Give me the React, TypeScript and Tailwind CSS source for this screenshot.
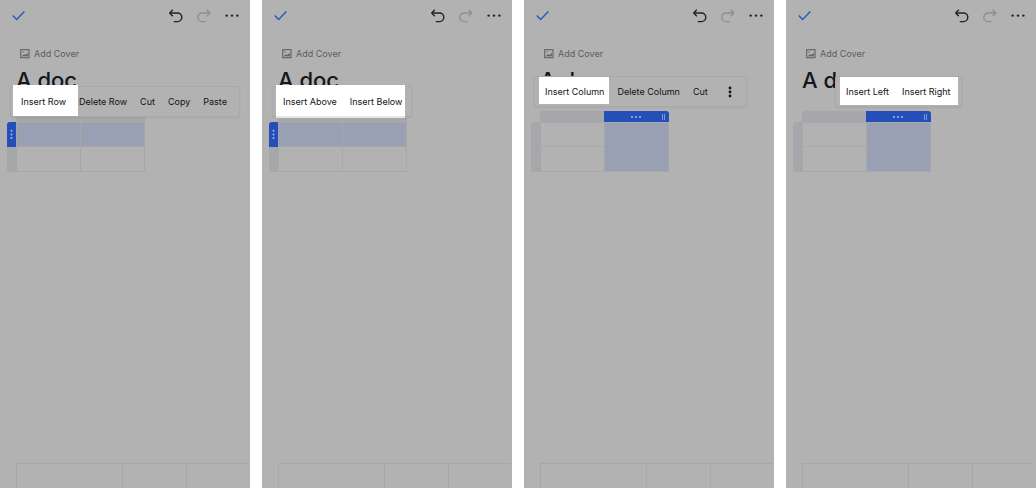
import clsx from 'clsx';

interface Screen {
  id: string;
  selection: 'row' | 'column';
  actions: string[];
  more?: boolean;
  toolbar: string;
  spotlight: string;
}

const screens: Screen[] = [
  {
    id: 'row-menu',
    selection: 'row',
    actions: ['Insert Row', 'Delete Row', 'Cut', 'Copy', 'Paste'],
    toolbar: 'left-[10px] top-[86px] w-[230px]',
    spotlight: 'left-[13px] top-[85px] h-[31px] w-[65px]',
  },
  {
    id: 'row-insert',
    selection: 'row',
    actions: ['Insert Above', 'Insert Below'],
    toolbar: 'left-[10px] top-[86px] w-[140px]',
    spotlight: 'left-[14px] top-[85px] h-[33px] w-[129px] border-b-2 border-[#e6e6e6]',
  },
  {
    id: 'column-menu',
    selection: 'column',
    actions: ['Insert Column', 'Delete Column', 'Cut'],
    more: true,
    toolbar: 'left-[10px] top-[76px] w-[213px]',
    spotlight: 'left-[15px] top-[77px] h-[27px] w-[70px]',
  },
  {
    id: 'column-insert',
    selection: 'column',
    actions: ['Insert Left', 'Insert Right'],
    toolbar: 'left-[49px] top-[76px] w-[127px]',
    spotlight: 'left-[54px] top-[77px] h-[28px] w-[118px]',
  },
];

function TopBar() {
  return (
    <header className="flex h-8 items-center justify-between pl-3 pr-[11px]">
      <button type="button" aria-label="Done">
        <svg width="13" height="12" viewBox="0 0 13 12" fill="none">
          <path d="M0.8 5.6L4.6 9.6L12.4 1.6" stroke="#2a55bd" strokeWidth="1.4" />
        </svg>
      </button>
      <div className="flex items-center gap-[14px]">
        <button type="button" aria-label="Undo">
          <svg width="14" height="14" viewBox="0 0 14 14" fill="none" stroke="#202226" strokeWidth="1.4">
            <path d="M3.8 0.8L0.8 4L3.8 7.2" />
            <path d="M1 4H8.5A4.3 4.3 0 0 1 8.5 12.6H4.8" />
          </svg>
        </button>
        <button type="button" aria-label="Redo" disabled>
          <svg width="14" height="14" viewBox="0 0 14 14" fill="none" stroke="#8d8f93" strokeWidth="1.4">
            <path d="M9.8 0.8L12.8 4L9.8 7.2" />
            <path d="M12.6 4H5.1A4.3 4.3 0 0 0 5.1 12.6H8.8" />
          </svg>
        </button>
        <button type="button" aria-label="More">
          <svg width="14" height="14" viewBox="0 0 14 14" fill="#202226">
            <circle cx="1.6" cy="6.6" r="1.2" />
            <circle cx="7" cy="6.6" r="1.2" />
            <circle cx="12.4" cy="6.6" r="1.2" />
          </svg>
        </button>
      </div>
    </header>
  );
}

function DocTable({ selection }: { selection: 'row' | 'column' }) {
  const byRow = selection === 'row';
  const cell = 'border border-[#a7a8a9] p-0';
  const selected = 'border-[#979cae] bg-[#9aa0b4]';

  return (
    <div className="ml-[7px] mt-4 grid grid-cols-[9px_129px] grid-rows-[11px_50px]">
      <div className="col-start-2 flex overflow-hidden rounded-t-[3px] bg-[#a5a7aa]">
        {!byRow && (
          <button type="button" aria-label="Column 2" className="ml-auto flex w-[65px] items-center justify-end bg-[#244eb8] pr-px">
            <svg width="40" height="11" viewBox="0 0 40 11" fill="#a9b8e0">
              <circle cx="4" cy="6" r="1" />
              <circle cx="8" cy="6" r="1" />
              <circle cx="12" cy="6" r="1" />
              <path d="M34 3h1v6h-1zM36 3h1v6h-1z" fill="#7f97d4" />
            </svg>
          </button>
        )}
      </div>
      <div className="row-start-2 flex flex-col overflow-hidden rounded-l-[3px] bg-[#a5a7aa]">
        {byRow && (
          <button type="button" aria-label="Row 1" className="flex h-[25px] items-center justify-center bg-[#244eb8]">
            <svg width="3" height="11" viewBox="0 0 3 11" fill="#a9b8e0">
              <circle cx="1.5" cy="1.8" r="1" />
              <circle cx="1.5" cy="5.4" r="1" />
              <circle cx="1.5" cy="9" r="1" />
            </svg>
          </button>
        )}
      </div>
      <table className="h-[50px] w-[129px] table-fixed border-collapse">
        <tbody>
          <tr className="h-6">
            <td className={clsx(cell, byRow && selected)} />
            <td className={clsx(cell, selected, !byRow && 'border-b-0')} />
          </tr>
          <tr>
            <td className={cell} />
            <td className={clsx(cell, !byRow && selected, !byRow && 'border-t-0')} />
          </tr>
        </tbody>
      </table>
    </div>
  );
}

function ContextToolbar({ screen }: { screen: Screen }) {
  return (
    <>
      <div className={clsx('absolute h-[31px] rounded-[2px] border border-[#a9a9a9] bg-[#b2b2b2] shadow-[0_1px_2px_rgba(0,0,0,0.06)]', screen.toolbar)} />
      <div className={clsx('absolute bg-white', screen.spotlight)} />
      <div
        role="toolbar"
        aria-label="Table actions"
        className={clsx('absolute flex h-[31px] items-center gap-[13px] whitespace-nowrap pl-[11px] text-[9px] text-[#101214]', screen.toolbar)}
      >
        {screen.actions.map((action) => (
          <button key={action} type="button">
            {action}
          </button>
        ))}
        {screen.more && (
          <button type="button" aria-label="More actions" className="ml-[7px]">
            <svg width="4" height="12" viewBox="0 0 4 12" fill="#111111">
              <circle cx="2" cy="2" r="1.4" />
              <circle cx="2" cy="6" r="1.4" />
              <circle cx="2" cy="10" r="1.4" />
            </svg>
          </button>
        )}
      </div>
    </>
  );
}

function DocScreen({ screen }: { screen: Screen }) {
  return (
    <section className="relative flex min-w-0 flex-col bg-[#b2b2b2]">
      <TopBar />
      <button type="button" className="ml-5 mt-3 flex h-5 items-center gap-1 self-start text-[9px] text-[#5a5d62]">
        <svg width="10" height="10" viewBox="0 0 10 10" fill="none" stroke="#5f6267">
          <rect x="0.7" y="0.7" width="8.3" height="8" strokeWidth="1.1" />
          <path d="M2.2 7.1L4.1 5.4L5.3 6.2L7.5 4.2V7.1Z" fill="#5f6267" strokeWidth="0.5" />
          <path d="M2.4 3H3.8" />
        </svg>
        Add Cover
      </button>
      <h1 className="ml-4 mt-0.5 text-[22px] font-medium leading-[29px] text-[#15171c]">A doc</h1>
      <DocTable selection={screen.selection} />
      <table className="ml-4 mr-0.5 mt-auto h-[25px] table-fixed border-collapse">
        <tbody>
          <tr>
            <td className="w-[106px] border-l border-t border-[#a7a7a7] p-0" />
            <td className="w-16 border-l border-t border-[#a7a7a7] p-0" />
            <td className="border-l border-t border-[#a7a7a7] p-0" />
          </tr>
        </tbody>
      </table>
      <ContextToolbar screen={screen} />
    </section>
  );
}

function App() {
  return (
    <main className="grid min-h-screen grid-cols-4 gap-3 bg-white font-['Inter',sans-serif]">
      {screens.map((screen) => (
        <DocScreen key={screen.id} screen={screen} />
      ))}
    </main>
  );
}

export default App;
